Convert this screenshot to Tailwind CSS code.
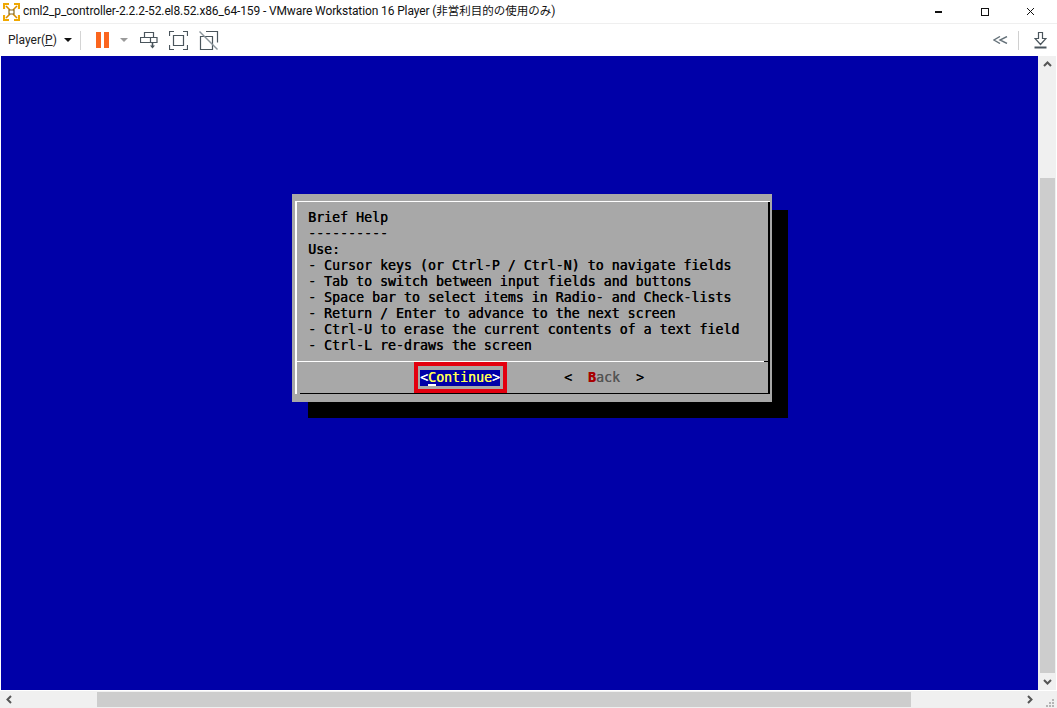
<!DOCTYPE html>
<html lang="en">
<head>
  <meta charset="UTF-8">
  <title>VMware Workstation 16 Player</title>
  <script src="https://cdn.jsdelivr.net/npm/@tailwindcss/browser@4"></script>
</head>
<body class="bg-white overflow-hidden">
  <div class="w-[1057px] h-[708px] flex flex-col bg-white font-['Roboto','Noto_Sans_CJK_JP',sans-serif]">

    <!-- Title bar -->
    <div class="h-[23px] flex items-center shrink-0 relative">
      <svg class="ml-[3px] w-[17px] h-[18px] shrink-0" viewBox="0 0 17 18" fill="none" stroke="#f0a800" stroke-width="2.2">
        <path d="M1 6V1h5M11 1h5v5M16 12v5h-5M6 17H1v-5"/>
        <path d="M3 3l4 4M14 3l-4 4M14 15l-4-4M3 15l4-4" stroke="#d98e00" stroke-width="1.6"/>
        <path d="M6 7h5v4H6z" stroke="#8a6a20" stroke-width="1.2"/>
      </svg>
      <span class="ml-[3px] text-[12px] tracking-[-0.12px] text-[#111] whitespace-nowrap leading-[23px]">cml2_p_controller-2.2.2-52.el8.52.x86_64-159 - VMware Workstation 16 Player (<span class="text-[11.5px] tracking-normal">非営利目的の使用のみ</span>)</span>
      <div class="ml-auto mr-[31px] flex items-center">
        <span class="w-[7px] h-[2px] bg-[#111] mr-[39px]"></span>
        <span class="w-[8px] h-[8px] border border-[#111] mr-[37px]"></span>
        <svg class="w-[9px] h-[9px] -mr-[9px]" viewBox="0 0 9 9" stroke="#111" stroke-width="1" fill="none"><path d="M1 1l7 7M8 1L1 8"/></svg>
      </div>
    </div>

    <!-- Toolbar -->
    <div class="h-[33px] border-t border-[#efefef] flex items-center shrink-0">
      <span class="ml-[8px] w-[47px] text-[12px] text-[#222] leading-none whitespace-nowrap">Player(<span class="underline">P</span>)</span>
      <span class="ml-[9px] w-0 h-0 border-x-[4px] border-x-transparent border-t-[4px] border-t-[#111]"></span>
      <span class="ml-[8px] w-px h-[19px] bg-[#d4d4d4]"></span>
      <span class="ml-[15px] w-[5px] h-[16px] bg-[#fb651e]"></span>
      <span class="ml-[3px] w-[5px] h-[16px] bg-[#fb651e]"></span>
      <span class="ml-[11px] w-0 h-0 border-x-[4px] border-x-transparent border-t-[4px] border-t-[#9a9a9a]"></span>
      <svg class="ml-[12px] w-[18px] h-[18px]" viewBox="0 0 18 18" fill="none" stroke="#4a555c" stroke-width="1.2">
        <path d="M4.5 1.5h9v5h-9zM.5 6.5h10v5H.5zM10.5 6.5h6.5v5h-6.5z"/>
        <path d="M12.5 12v4" stroke-width="1.6"/><path d="M10 14.5h5l-2.5 3z" fill="#4a555c" stroke="none"/>
      </svg>
      <svg class="ml-[11px] w-[19px] h-[19px]" viewBox="0 0 19 19" fill="none" stroke="#4a555c" stroke-width="1.2">
        <path d="M.5 5V.5H5M14 .5h4.5V5M18.5 14v4.5H14M5 18.5H.5V14"/>
        <path d="M4.5 4.5h10v10h-10z"/>
      </svg>
      <svg class="ml-[11px] w-[20px] h-[19px]" viewBox="0 0 20 19" fill="none" stroke="#4a555c" stroke-width="1.2">
        <path d="M7 .5h11.5v11M1.5 5.5h12v13h-12z"/>
        <path d="M.5.5l18 18" stroke="#8b959b" stroke-width="1.4"/>
      </svg>
      <svg class="ml-auto w-[15px] h-[8px]" viewBox="0 0 15 8" fill="none" stroke="#66727a" stroke-width="1.4">
        <path d="M7 .5L1 4l6 3.5M14 .5L7 4l7 3.5"/>
      </svg>
      <span class="ml-[10px] w-px h-[19px] bg-[#d0d0d0]"></span>
      <svg class="ml-[15px] mr-[10px] w-[13px] h-[17px]" viewBox="0 0 13 17" fill="none" stroke="#4a555c" stroke-width="1.2">
        <path d="M4.5.5h4v6h3.5l-5.5 6-5.5-6h3.5z"/>
        <path d="M.5 15.5h12" stroke-width="2"/>
      </svg>
    </div>

    <!-- Guest screen and vertical scrollbar -->
    <div class="flex-1 flex min-h-0">
      <div class="flex-1 ml-px bg-[#0000a8] pl-[291px] pt-[138px]">
        <!-- Dialog -->
        <div class="w-[480px] h-[208px] bg-[#a8a8a8] shadow-[16px_16px_0_#000] pt-[7px] pl-[3px] font-['DejaVu_Sans_Mono',monospace] text-[13.28px] leading-[16px] text-black [text-shadow:0.4px_0_0_currentColor]">
          <div class="w-[475px] h-[193px] border-l-2 border-t border-white relative flex flex-col">
            <div class="absolute left-[3px] right-0 bottom-0 h-px bg-black"></div>
            <div class="absolute right-0 top-0 bottom-0 w-[2px] bg-black"></div>
            <pre class="pl-[11px] pt-[8px] h-[159px] font-['DejaVu_Sans_Mono',monospace] whitespace-pre">Brief Help
----------
Use:
- Cursor keys (or Ctrl-P / Ctrl-N) to navigate fields
- Tab to switch between input fields and buttons
- Space bar to select items in Radio- and Check-lists
- Return / Enter to advance to the next screen
- Ctrl-U to erase the current contents of a text field
- Ctrl-L re-draws the screen</pre>
            <div class="relative h-px w-[471px] bg-white shrink-0">
              <span class="absolute right-0 top-0 w-[4px] h-px bg-black"></span>
            </div>
            <div class="flex pl-[123px] pt-[8px]">
              <div class="relative w-[80px] h-[16px] bg-[#0000a8] text-[#ffff54] whitespace-pre"><span class="text-white">&lt;</span>Continue<span class="text-white">&gt;</span><span class="absolute left-[8px] top-[14px] w-[8px] h-[2px] bg-white"></span><span class="absolute -left-[6px] -right-[7px] -top-[8px] -bottom-[7px] border-[4px] border-[#e3000f]"></span></div>
              <div class="ml-[64px] w-[80px] whitespace-pre text-black">&lt;  <span class="text-[#a80000] font-bold">B</span><span class="text-[#545454]">ack</span>  &gt;</div>
            </div>
          </div>
        </div>
      </div>
      <div class="w-[18px] mr-px bg-[#f0f0f0] flex flex-col items-center relative shrink-0">
        <svg class="mt-[5px] w-[9px] h-[6px]" viewBox="0 0 9 6" fill="none" stroke="#555" stroke-width="2"><path d="M1 5l3.5-3.5L8 5"/></svg>
        <div class="mt-[111px] w-[15px] h-[495px] bg-[#cdcdcd]"></div>
        <svg class="mt-[6px] w-[9px] h-[6px]" viewBox="0 0 9 6" fill="none" stroke="#555" stroke-width="2"><path d="M1 1l3.5 3.5L8 1"/></svg>
      </div>
    </div>

    <!-- Horizontal scrollbar -->
    <div class="h-[17px] mt-px bg-[#f0f0f0] flex items-center shrink-0 relative">
      <svg class="ml-[6px] w-[6px] h-[9px]" viewBox="0 0 6 9" fill="none" stroke="#555" stroke-width="2"><path d="M5 1L1.5 4.5 5 8"/></svg>
      <div class="ml-[85px] -mt-px w-[814px] h-[15px] bg-[#cdcdcd]"></div>
      <svg class="ml-[116px] w-[6px] h-[9px]" viewBox="0 0 6 9" fill="none" stroke="#555" stroke-width="2"><path d="M1 1l3.5 3.5L1 8"/></svg>
      <svg class="ml-[13px] mt-[7px] w-[8px] h-[8px]" viewBox="0 0 8 8" fill="#b5b5b5"><path d="M6 0h2v2H6zM3 3h2v2H3zM6 3h2v2H6zM0 6h2v2H0zM3 6h2v2H3zM6 6h2v2H6z"/></svg>
    </div>
  </div>
</body>
</html>
